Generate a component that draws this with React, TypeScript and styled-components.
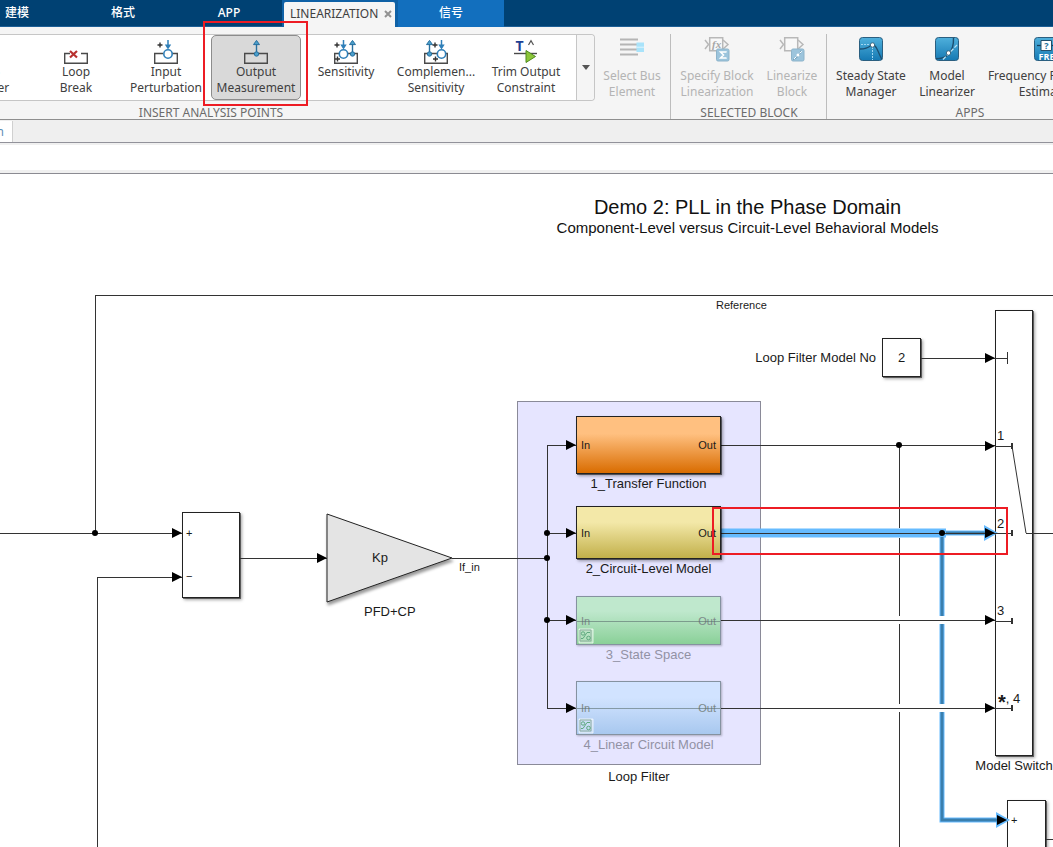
import React from "react";
import styled, { createGlobalStyle, css } from "styled-components";

const GlobalStyle = createGlobalStyle`
  *, *::before, *::after { box-sizing: border-box; }
  html, body { margin: 0; }
  body {
    background: #fff;
    font-family: "Noto Sans", "Noto Sans CJK SC", sans-serif;
    font-size: 12px;
    color: #404040;
    overflow: hidden;
  }
  button { font: inherit; color: inherit; border: 0; background: none; padding: 0; }
`;

const Shell = styled.div`
  display: flex;
  flex-direction: column;
  height: 100vh;
  overflow: hidden;
`;

/* ---------- tab strip ---------- */

const TabBar = styled.nav`
  display: flex;
  flex: none;
  height: 27px;
  padding-right: 8px;
  background: #004173;
  border-bottom: 1px solid #1d5f96;
`;

const MainTab = styled.button<{ $tone?: "context" }>`
  flex: none;
  width: 106px;
  height: 27px;
  padding-bottom: 2px;
  color: #fff;
  font-weight: 500;
  font-size: 12px;
  line-height: 24px;
  background: ${(p) => (p.$tone === "context" ? "#126fbe" : "transparent")};
  &:first-child { margin-left: -36px; }
`;

const ActiveTabFrame = styled.div`
  display: flex;
  flex: none;
  height: 27px;
  padding: 2px 3px 0 2px;
  background: #0f61a6;
`;

const ActiveTab = styled.div`
  display: flex;
  align-items: center;
  gap: 6px;
  width: 111px;
  height: 25px;
  padding: 0 7px 2px 6px;
  background: #f5f5f5;
  border-radius: 2px 2px 0 0;
`;

const ActiveTabName = styled.button`
  flex: 1;
  text-align: left;
  white-space: nowrap;
`;

const CloseTab = styled.button`
  display: flex;
  flex: none;
`;

/* ---------- ribbon ---------- */

const Ribbon = styled.div`
  display: flex;
  flex: none;
  height: 93px;
  padding-top: 7px;
  background: #f5f5f5;
  border-bottom: 1px solid #8f8f8f;
`;

const Section = styled.section<{ $width?: number }>`
  display: flex;
  flex-direction: column;
  flex: ${(p) => (p.$width ? "none" : "1 0 auto")};
  width: ${(p) => (p.$width ? `${p.$width}px` : "auto")};
  border-right: ${(p) => (p.$width ? "1px solid #bdbdbd" : "0")};
`;

const SectionTools = styled.div<{ $inset: number }>`
  display: flex;
  height: 70px;
  padding-left: ${(p) => p.$inset}px;
`;

const SectionTitle = styled.h2<{ $width: number }>`
  margin: 0;
  width: ${(p) => p.$width}px;
  color: #6c6c6c;
  font-size: 12px;
  font-weight: 400;
  line-height: 18px;
  height: 15px;
  text-align: center;
  white-space: nowrap;
`;

const Gallery = styled.div`
  display: flex;
  height: 67px;
  background: #fff;
  border: 1px solid #c6c6c6;
  border-left: 0;
  border-radius: 0 4px 4px 0;
`;

const GalleryItems = styled.div`
  display: flex;
  margin-left: -59px;
  width: 635px;
`;

const ToolButton = styled.button<{ $width: number; $selected?: boolean }>`
  position: relative;
  display: flex;
  flex: none;
  flex-direction: column;
  align-items: center;
  width: ${(p) => p.$width}px;
  height: 65px;
  padding-top: 4px;
  border: 1px solid transparent;
  border-radius: 5px;
  font-size: 12px;
  line-height: 16px;
  white-space: nowrap;
  ${(p) =>
    p.$selected &&
    css`
      background: #d9d9d9;
      border-color: #8c8c8c;
    `}
  &:disabled { color: #b4b4b4; }
  svg { flex: none; overflow: visible; }
`;

const LargeTool = styled(ToolButton)`
  padding-top: 2px;
  svg { margin-bottom: 7px; }
`;

const GalleryMore = styled.button`
  display: flex;
  align-items: center;
  justify-content: center;
  width: 18px;
  background: #f5f5f5;
  border-left: 1px solid #c6c6c6;
  border-radius: 0 4px 4px 0;
`;

/* ---------- document strip ---------- */

const DocStrip = styled.div`
  display: flex;
  flex: none;
  height: 23px;
  padding-top: 1px;
  background: #efefef;
  border-bottom: 1px solid #92929a;
`;

const DocTab = styled.button`
  display: flex;
  align-items: center;
  justify-content: flex-end;
  width: 13px;
  padding-right: 8px;
  color: #5b8db5;
  background: #fff;
  border-right: 1px solid #d0d0d0;
`;

const PathBar = styled.div`
  flex: none;
  height: 31px;
  background: #fff;
  border-top: 2px solid #f0f0f0;
  border-bottom: 1px solid #8b8b92;
  box-shadow: inset 0 -3px 0 #f0f0f0;
`;

/* ---------- model canvas ---------- */

const Canvas = styled.main`
  position: relative;
  flex: 1;
  min-height: 0;
  overflow: hidden;
  background: #fff;
  color: #1a1a1a;
  font-family: "Liberation Sans", sans-serif;
  font-size: 13px;
`;

const Heading = styled.header`
  position: absolute;
  left: 557px;
  top: 22px;
  width: 381px;
  text-align: center;
  white-space: nowrap;
  color: #111;
`;

const ModelTitle = styled.h1`
  margin: 0 -20px;
  font-size: 20px;
  font-weight: 400;
  line-height: 23px;
`;

const ModelSubtitle = styled.p`
  margin: 0 -20px;
  font-size: 15px;
  line-height: 18px;
`;

type Box = { $x: number; $y: number; $w: number; $h: number };

const placed = css<Box>`
  position: absolute;
  left: ${(p) => p.$x}px;
  top: ${(p) => p.$y}px;
  width: ${(p) => p.$w}px;
  height: ${(p) => p.$h}px;
`;

const Area = styled.div<Box>`
  ${placed}
  background: #e6e5ff;
  border: 1px solid #8a8a98;
`;

const AreaName = styled.span`
  position: absolute;
  left: 0;
  right: 0;
  top: 100%;
  padding-top: 5px;
  line-height: 16px;
  text-align: center;
`;

const Wires = styled.svg`
  position: absolute;
  left: 0;
  top: 0;
  width: 100%;
  height: 100%;
`;

const Block = styled.div<Box & { $fill?: string; $dim?: boolean }>`
  ${placed}
  display: flex;
  align-items: center;
  justify-content: space-between;
  padding: 0 4px;
  font-size: 11px;
  color: ${(p) => (p.$dim ? "#7d8a8a" : "#1a1a1a")};
  background: ${(p) => p.$fill || "#fff"};
  border: ${(p) => (p.$dim ? "1px solid #8592a0" : "1px solid #222")};
  box-shadow: ${(p) =>
    p.$dim ? "1px 1px 2px rgba(0,0,0,.25)" : "1px 1px 0 rgba(0,0,0,.5), 2px 2px 3px rgba(0,0,0,.35)"};
`;

const BlockName = styled.span<{ $dim?: boolean }>`
  position: absolute;
  left: -40px;
  right: -40px;
  top: 100%;
  padding-top: 3px;
  font-size: 13px;
  line-height: 16px;
  text-align: center;
  white-space: nowrap;
  color: ${(p) => (p.$dim ? "#9292a4" : "#1a1a1a")};
`;

const SideName = styled.span`
  position: absolute;
  right: 100%;
  padding-right: 7px;
  font-size: 13px;
  white-space: nowrap;
`;

const BlockValue = styled.span`
  flex: 1;
  text-align: center;
  font-size: 13px;
`;

const PassThrough = styled.i`
  position: absolute;
  left: 0;
  right: 0;
  top: 50%;
  height: 1px;
  background: rgba(90, 110, 110, 0.6);
`;

const VariantBadge = styled.svg`
  position: absolute;
  left: 1px;
  bottom: 0;
`;

const Tag = styled.span<{ $x: number; $y: number; $size?: number }>`
  position: absolute;
  left: ${(p) => p.$x}px;
  top: ${(p) => p.$y}px;
  font-size: ${(p) => p.$size || 13}px;
  line-height: 16px;
  white-space: nowrap;
`;

const Star = styled.b`
  font-size: 20px;
  line-height: 16px;
  vertical-align: -6px;
`;

const Callout = styled.div`
  position: absolute;
  z-index: 2;
  border: 2px solid #ed1c24;
  pointer-events: none;
`;

const ToolCallout = styled(Callout)`
  inset: -15px -8px -7px -9px;
`;

const SignalCallout = styled(Callout)`
  left: 712px;
  top: 333px;
  width: 296px;
  height: 48px;
`;

/* ---------- icons ---------- */

const BLUE = "#2f7fb8";

const Frame = ({ open }: { open?: boolean }) => (
  <path
    d={open ? "M6 13.5H.7V23.3H23.3V13.5H17" : "M9 13.5H.7V23.3H23.3V13.5H18"}
    fill="none"
    stroke="#4a4a4a"
    strokeWidth="1.4"
  />
);
const ClosedFrame = () => (
  <path d="M.7 13.5H23.3V23.3H.7z" fill="none" stroke="#4a4a4a" strokeWidth="1.4" />
);
const Plus = ({ x, y }: { x: number; y: number }) => (
  <path d={`M${x - 2.5} ${y}h5M${x} ${y - 2.5}v5`} stroke="#333" strokeWidth="1.4" />
);
const Inject = ({ x }: { x: number }) => (
  <g stroke={BLUE}>
    <path d={`M${x} 0v8`} strokeWidth="1.5" />
    <path d={`M${x - 3.2} 4.500h6.4l-3.2 5z`} fill={BLUE} stroke="none" />
    <circle cx={x} cy="14" r="4.2" fill="#fff" strokeWidth="1.6" />
  </g>
);
const Measure = ({ x }: { x: number }) => (
  <g fill="#4b9fcb" stroke="#28709f" strokeWidth="1">
    <path d={`M${x} 4v10`} strokeWidth="1.4" />
    <path d={`M${x - 3} 4.6l3-4.2 3 4.2z`} />
    <circle cx={x} cy="14" r="2.2" />
  </g>
);

const Icon = ({ children }: { children: React.ReactNode }) => (
  <svg width="24" height="24" viewBox="0 0 24 24" aria-hidden="true">
    {children}
  </svg>
);

const LoopBreakIcon = () => (
  <Icon>
    <Frame open />
    <path d="M6 11l7 6.500M13 11l-7 6.500" stroke="#b8312f" strokeWidth="2.2" />
  </Icon>
);
const InputIcon = () => (
  <Icon>
    <Frame />
    <Inject x={14} />
    <Plus x={6} y={5} />
  </Icon>
);
const OutputIcon = () => (
  <Icon>
    <ClosedFrame />
    <Measure x={12.5} />
  </Icon>
);
const SensitivityIcon = () => (
  <Icon>
    <ClosedFrame />
    <Inject x={9.5} />
    <Measure x={18.5} />
    <Plus x={3} y={5} />
    <Plus x={3.5} y={19} />
  </Icon>
);
const ComplementIcon = () => (
  <Icon>
    <ClosedFrame />
    <Measure x={5.5} />
    <Inject x={17.5} />
    <Plus x={11} y={5} />
    <Plus x={11.5} y={19} />
  </Icon>
);
const TrimIcon = () => (
  <Icon>
    <path d="M0 13.5H23" stroke="#4a4a4a" strokeWidth="1.4" />
    <path d="M14.5 5L17 .6 19.5 5" fill="none" stroke="#555" strokeWidth="1.2" />
    <text x="1.500" y="11" fontFamily="Open Sans" fontWeight="700" fontSize="14" fill="#1d3f94">T</text>
    <path d="M12 10.5l9.5 6-9.5 6z" fill="#8cc63a" stroke="#4e8a1c" />
  </Icon>
);
const BusIcon = () => (
  <Icon>
    <path d="M0 2.5h18M0 7.500h18M0 12.500h18M0 17.500h18" stroke="#b5b5b5" strokeWidth="2" />
    <path d="M16.500 5.500H24v9.500h-7.500z" fill="#a9e3fa" />
    <path d="M16.500 10.200H24" stroke="#dff5fd" />
  </Icon>
);
const GhostBlock = () => (
  <g fill="none" stroke="#b8b8b8" strokeWidth="1.500">
    <path d="M0 3l3.500 4.500L0 12M18 3l5 4.500L18 12" />
    <path d="M4.700.7h13v13h-13z" fill="#f8f8f8" />
  </g>
);
const SpecifyIcon = () => (
  <Icon>
    <GhostBlock />
    <text x="7" y="10.500" fontFamily="Liberation Serif" fontStyle="italic" fontWeight="700" fontSize="11" fill="#a6a6a6">fx</text>
    <rect x="11.500" y="12" width="12.500" height="12" rx="1.500" fill="#9cc4dc" stroke="#8db4cb" />
    <path d="M21 15.500v-.5h-5.500l3 3-3 3H21v-.5" fill="none" stroke="#fff" strokeWidth="1.500" />
  </Icon>
);
const LinearizeIcon = () => (
  <Icon>
    <GhostBlock />
    <rect x="11.500" y="12" width="12.500" height="12" rx="1.500" fill="#9cc4dc" stroke="#8db4cb" />
    <path d="M13 22.500q7-2.500 8-9" fill="none" stroke="#6f9db8" />
    <path d="M14 22l8-8" stroke="#fff" strokeDasharray="3 1" />
    <circle cx="18" cy="18" r="1.500" fill="#fff" />
  </Icon>
);
const AppTile = ({ children }: { children: React.ReactNode }) => (
  <Icon>
    <defs>
      <linearGradient id="tile" x1="0" y1="0" x2="0" y2="1">
        <stop offset="0" stopColor="#4fb0dc" />
        <stop offset="1" stopColor="#1579b3" />
      </linearGradient>
    </defs>
    <rect x=".5" y=".5" width="23" height="23" rx="3" fill="url(#tile)" stroke="#2b5f80" />
    {children}
  </Icon>
);
const SteadyIcon = () => (
  <AppTile>
    <path d="M2 7.500h10M13.500 10v13" stroke="#9fd6f0" strokeDasharray="2 1" />
    <path d="M1 12c4 0 8-1 11-3.500 3-1.500 5 1 6.500 4.500s3 7 4.500 9.500" fill="none" stroke="#1c4f70" strokeWidth="1.300" />
    <circle cx="13.500" cy="8" r="2.200" fill="#fff" stroke="#23506b" strokeWidth=".8" />
  </AppTile>
);
const LinearizerIcon = () => (
  <AppTile>
    <path d="M1 21.500c10 1 18-6 17.500-20.500" fill="none" stroke="#1c4f70" strokeWidth="1.400" />
    <path d="M8 22.500L22 8" stroke="#b9e1f3" strokeWidth="1.300" strokeDasharray="4 1.500" />
    <circle cx="13.500" cy="16" r="2.200" fill="#fff" stroke="#23506b" strokeWidth=".8" />
  </AppTile>
);
const FreIcon = () => (
  <AppTile>
    <path d="M3 8.500h18" stroke="#123f5c" strokeWidth="1.300" />
    <path d="M7 3.500h10.500v10H7z" fill="#fff" stroke="#23506b" />
    <text x="12.300" y="12" textAnchor="middle" fontFamily="Open Sans" fontWeight="700" fontSize="9" fill="#23709c">?</text>
    <text x="12.500" y="22.500" textAnchor="middle" fontFamily="Open Sans" fontWeight="700" fontSize="9" fill="#fff">FRE</text>
  </AppTile>
);

/* ---------- diagram pieces ---------- */

const Arrow = ({ x, y }: { x: number; y: number }) => <path d={`M${x - 10} ${y - 5}v10l10-5z`} />;
const Dot = ({ x, y }: { x: number; y: number }) => <circle cx={x} cy={y} r="3" />;

const Variant = () => (
  <VariantBadge width="16" height="16" viewBox="0 0 16 16">
    <path d="M1 1h14v14H1z" fill="rgba(255,255,255,.3)" stroke="rgba(255,255,255,.7)" />
    <path d="M2 2h11v11H2z" fill="none" stroke="#8fae9f" />
    <circle cx="5" cy="5.500" r="1.700" fill="none" stroke="#5fa97f" />
    <circle cx="10.500" cy="10" r="1.800" fill="none" stroke="#5fa97f" />
    <path d="M3 10.500h2l4-6h3" fill="none" stroke="#5fa97f" />
  </VariantBadge>
);

const galleryTools = [
  { icon: <Icon>{null}</Icon>, lines: ["Loop", "Transfer"] },
  { icon: <LoopBreakIcon />, lines: ["Loop", "Break"] },
  { icon: <InputIcon />, lines: ["Input", "Perturbation"] },
  { icon: <OutputIcon />, lines: ["Output", "Measurement"], selected: true },
  { icon: <SensitivityIcon />, lines: ["Sensitivity"] },
  { icon: <ComplementIcon />, lines: ["Complemen...", "Sensitivity"] },
  { icon: <TrimIcon />, lines: ["Trim Output", "Constraint"] },
];

const Lines = ({ lines }: { lines: string[] }) => (
  <>
    {lines.map((l) => (
      <span key={l}>{l}</span>
    ))}
  </>
);

const filterBlocks = [
  { name: "1_Transfer Function", y: 242, h: 58, fill: "linear-gradient(#ffc080 30%, #d96c00)" },
  { name: "2_Circuit-Level Model", y: 332, h: 53, fill: "linear-gradient(#f3e8a8 30%, #c2b04a)" },
  { name: "3_State Space", y: 422, h: 49, fill: "linear-gradient(#bfe8cd 30%, #8ad098)", dim: true },
  { name: "4_Linear Circuit Model", y: 507, h: 54, fill: "linear-gradient(#d1e3ff 30%, #a8c8ef)", dim: true },
];

export default function App() {
  return (
    <Shell>
      <GlobalStyle />
      <TabBar>
        <MainTab>建模</MainTab>
        <MainTab>格式</MainTab>
        <MainTab>APP</MainTab>
        <ActiveTabFrame>
          <ActiveTab>
            <ActiveTabName>LINEARIZATION</ActiveTabName>
            <CloseTab aria-label="Close tab">
              <svg width="8" height="8" viewBox="0 0 8 8">
                <path d="M1 1l6 6M7 1L1 7" stroke="#929292" strokeWidth="2" />
              </svg>
            </CloseTab>
          </ActiveTab>
        </ActiveTabFrame>
        <MainTab $tone="context">信号</MainTab>
      </TabBar>

      <Ribbon>
        <Section $width={671}>
          <SectionTools $inset={0}>
            <Gallery>
              <GalleryItems>
                {galleryTools.map((t) => (
                  <ToolButton key={t.lines.join()} $width={90} $selected={t.selected}>
                    {t.icon}
                    <Lines lines={t.lines} />
                    {t.selected && <ToolCallout />}
                  </ToolButton>
                ))}
              </GalleryItems>
              <GalleryMore aria-label="More">
                <svg width="8" height="5" viewBox="0 0 8 5">
                  <path d="M0 0h8L4 5z" fill="#555" />
                </svg>
              </GalleryMore>
            </Gallery>
            <LargeTool $width={74} disabled>
              <BusIcon />
              <Lines lines={["Select Bus", "Element"]} />
            </LargeTool>
          </SectionTools>
          <SectionTitle $width={422}>INSERT ANALYSIS POINTS</SectionTitle>
        </Section>
        <Section $width={156}>
          <SectionTools $inset={5}>
            <LargeTool $width={82} disabled>
              <SpecifyIcon />
              <Lines lines={["Specify Block", "Linearization"]} />
            </LargeTool>
            <LargeTool $width={68} disabled>
              <LinearizeIcon />
              <Lines lines={["Linearize", "Block"]} />
            </LargeTool>
          </SectionTools>
          <SectionTitle $width={156}>SELECTED BLOCK</SectionTitle>
        </Section>
        <Section>
          <SectionTools $inset={4}>
            <LargeTool $width={80}>
              <SteadyIcon />
              <Lines lines={["Steady State", "Manager"]} />
            </LargeTool>
            <LargeTool $width={72}>
              <LinearizerIcon />
              <Lines lines={["Model", "Linearizer"]} />
            </LargeTool>
            <LargeTool $width={126}>
              <FreIcon />
              <Lines lines={["Frequency Response", "Estimator"]} />
            </LargeTool>
          </SectionTools>
          <SectionTitle $width={286}>APPS</SectionTitle>
        </Section>
      </Ribbon>

      <DocStrip>
        <DocTab>n</DocTab>
      </DocStrip>
      <PathBar />

      <Canvas>
        <Heading>
          <ModelTitle>Demo 2: PLL in the Phase Domain</ModelTitle>
          <ModelSubtitle>Component-Level versus Circuit-Level Behavioral Models</ModelSubtitle>
        </Heading>

        <Area $x={517} $y={227} $w={244} $h={364}>
          <AreaName>Loop Filter</AreaName>
        </Area>

        <Block $x={182} $y={338} $w={58} $h={86} />
        <Block $x={882} $y={164} $w={39} $h={39}>
          <SideName>Loop Filter Model No</SideName>
          <BlockValue>2</BlockValue>
        </Block>
        <Block $x={995} $y={136} $w={38} $h={446}>
          <BlockName>Model Switch</BlockName>
        </Block>
        <Block $x={1007} $y={626} $w={39} $h={80} />

        <Wires>
          <g stroke="#66bbff" fill="none">
            <path d="M721 359H946" strokeWidth="9" />
            <path d="M942 359H986M942 359V442M942 450V530M942 538V646H1000" strokeWidth="5" />
            <path d="M984 351v16l14-8zM996 638v16l14-8z" fill="#66bbff" stroke="none" />
          </g>
          <path d="M946 359H988M942 363V442M942 450V530M942 538V646H1000" stroke="#3a7fae" strokeWidth="3" fill="none" />
          <g stroke="#333" fill="none" shapeRendering="crispEdges">
            <path d="M0 359H182M95 359V121H4000" />
            <path d="M182 403H97V4000" />
            <path d="M240 384H327M452 384H547" />
            <path d="M576 271H547V534H576M547 359H576M547 446H576" />
            <path d="M721 271H995M721 359H995M721 446H995M721 534H995" />
            <path d="M899 271V354M899 364V442M899 450V530M899 538V4000" />
            <path d="M921 184H1007M1007 178V190" />
            <path d="M995 272H1012M995 359H1012M995 447H1012M995 534H1012" />
            <path d="M1012 269V275M1012 356V362M1012 444V450M1012 531V537" strokeWidth="2" />
            <path d="M1026 359H4000M1046 665H4000" />
          </g>
          <path d="M1012 272L1026 359" stroke="#333" />
          <g fill="#000">
            <Arrow x={182} y={359} />
            <Arrow x={182} y={403} />
            <Arrow x={327} y={384} />
            <Arrow x={576} y={271} />
            <Arrow x={576} y={359} />
            <Arrow x={576} y={446} />
            <Arrow x={576} y={534} />
            <Arrow x={995} y={184} />
            <Arrow x={995} y={272} />
            <Arrow x={995} y={359} />
            <Arrow x={995} y={446} />
            <Arrow x={995} y={534} />
            <Arrow x={1007} y={646} />
            <Dot x={95} y={359} />
            <Dot x={547} y={359} />
            <Dot x={547} y={384} />
            <Dot x={547} y={446} />
            <Dot x={899} y={271} />
            <Dot x={942} y={359} />
          </g>
          <defs>
            <filter id="lift" x="-10%" y="-10%" width="120%" height="125%">
              <feDropShadow dx="1" dy="3" stdDeviation="1.500" floodOpacity=".4" />
            </filter>
          </defs>
          <path d="M327 340V428L452 384z" fill="#e4e4e4" stroke="#222" filter="url(#lift)" />
        </Wires>

        {filterBlocks.map((b) => (
          <Block key={b.name} $x={576} $y={b.y} $w={145} $h={b.h} $fill={b.fill} $dim={b.dim}>
            {b.dim && <PassThrough />}
            <span>In</span>
            <span>Out</span>
            {b.dim && <Variant />}
            <BlockName $dim={b.dim}>{b.name}</BlockName>
          </Block>
        ))}

        <Tag $x={716} $y={123} $size={11}>Reference</Tag>
        <Tag $x={459} $y={385} $size={11}>If_in</Tag>
        <Tag $x={372} $y={376}>Kp</Tag>
        <Tag $x={364} $y={430}>PFD+CP</Tag>
        <Tag $x={186} $y={351} $size={11}>+</Tag>
        <Tag $x={186} $y={394} $size={11}>−</Tag>
        <Tag $x={1011} $y={638} $size={11}>+</Tag>
        <Tag $x={997} $y={254}>1</Tag>
        <Tag $x={997} $y={342}>2</Tag>
        <Tag $x={997} $y={429}>3</Tag>
        <Tag $x={998} $y={517}><Star>*</Star>, 4</Tag>
        <SignalCallout />
      </Canvas>
    </Shell>
  );
}
